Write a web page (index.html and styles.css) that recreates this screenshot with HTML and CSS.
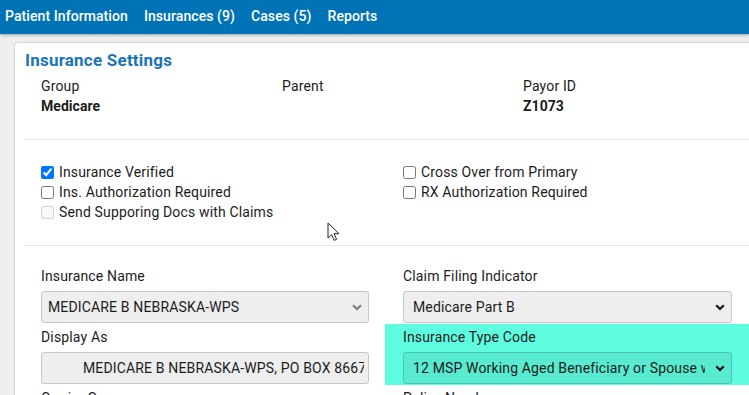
FILE: index.html
```html
<!DOCTYPE html>
<html lang="en">
<head>
<meta charset="utf-8">
<title>Insurance Settings</title>
<link rel="stylesheet" href="styles.css">
</head>
<body>
<nav class="topnav">
  <a class="nav-item">Patient Information</a>
  <a class="nav-item">Insurances (9)</a>
  <a class="nav-item">Cases (5)</a>
  <a class="nav-item">Reports</a>
</nav>
<main class="page">
  <section class="card">
    <h2 class="card-title">Insurance Settings</h2>
    <div class="info-grid">
      <div class="info">
        <div class="info-label">Group</div>
        <div class="info-value">Medicare</div>
      </div>
      <div class="info">
        <div class="info-label">Parent</div>
        <div class="info-value"></div>
      </div>
      <div class="info">
        <div class="info-label">Payor ID</div>
        <div class="info-value">Z1073</div>
      </div>
    </div>
    <div class="checks">
      <div class="check-col">
        <label class="check"><input type="checkbox" checked><span>Insurance Verified</span></label>
        <label class="check"><input type="checkbox"><span>Ins. Authorization Required</span></label>
        <label class="check"><input type="checkbox" disabled><span>Send Supporing Docs with Claims</span></label>
      </div>
      <div class="check-col">
        <label class="check"><input type="checkbox"><span>Cross Over from Primary</span></label>
        <label class="check"><input type="checkbox"><span>RX Authorization Required</span></label>
      </div>
    </div>
    <div class="form-grid">
      <div class="form-col">
        <div class="form-group">
          <div class="form-label">Insurance Name</div>
          <div class="select select-soft">
            <span class="select-text">MEDICARE B NEBRASKA-WPS</span>
            <svg class="chev" width="10" height="7" viewBox="0 0 10 7"><path d="M1 1.2 L5 5 L9 1.2" fill="none" stroke="#7b7b7b" stroke-width="2"/></svg>
          </div>
        </div>
        <div class="form-group">
          <div class="form-label">Display As</div>
          <div class="input-box"><span class="input-text">MEDICARE B NEBRASKA-WPS, PO BOX 8667</span></div>
        </div>
        <div class="form-group">
          <div class="form-label">Carrier Group</div>
        </div>
      </div>
      <div class="form-col">
        <div class="form-group">
          <div class="form-label">Claim Filing Indicator</div>
          <div class="select select-native">
            <span class="select-text">Medicare Part B</span>
            <svg class="chev" width="10" height="7" viewBox="0 0 10 7"><path d="M1.2 1.3 L5 5 L8.8 1.3" fill="none" stroke="#111" stroke-width="2.3"/></svg>
          </div>
        </div>
        <div class="form-group highlight">
          <div class="form-label">Insurance Type Code</div>
          <div class="select select-native select-tint">
            <span class="select-text">12 MSP Working Aged Beneficiary or Spouse with Employer Group Health Plan</span>
            <svg class="chev" width="10" height="7" viewBox="0 0 10 7"><path d="M1.2 1.3 L5 5 L8.8 1.3" fill="none" stroke="#111" stroke-width="2.3"/></svg>
          </div>
        </div>
        <div class="form-group">
          <div class="form-label">Policy Number</div>
        </div>
      </div>
    </div>
  </section>
</main>
<svg class="cursor" width="14" height="20" viewBox="0 0 14 20"><path d="M1 1 L1 16 L4.6 12.6 L7.2 18.4 L9.6 17.3 L7.1 11.7 L12 11.7 Z" fill="#fff" stroke="#222" stroke-width="1" stroke-linejoin="round"/></svg>
</body>
</html>
```
FILE: styles.css
```css
* { box-sizing: border-box; }
html, body { margin: 0; padding: 0; }
body {
  position: relative;
  width: 749px;
  height: 395px;
  overflow: hidden;
  background: #efefef;
  font-family: Roboto, "Liberation Sans", Arial, sans-serif;
  font-size: 14px;
  color: #1c1c1c;
}
.topnav {
  display: flex;
  gap: 16px;
  height: 34px;
  padding: 6px 0 0 5px;
  background: #0073b7;
  box-shadow: 0 1px 3px rgba(0, 0, 0, 0.35);
  position: relative;
  z-index: 1;
  letter-spacing: 0.08px;
}
.nav-item {
  color: #fff;
  font-weight: 500;
  line-height: 20px;
  text-decoration: none;
  white-space: nowrap;
}
.page {
  padding: 8px 0 0 14px;
}
.card {
  width: 760px;
  background: #fff;
  border: 1px solid #d8d8d8;
  border-radius: 4px;
  box-shadow: 0 0 2px rgba(0, 0, 0, 0.08);
  padding: 5px 0 0 9px;
  letter-spacing: 0.15px;
}
.card-title {
  margin: 0 0 4px 1px;
  font-size: 17px;
  line-height: 24px;
  font-weight: 700;
  color: #1a74b9;
  letter-spacing: 0.22px;
}
.info-grid {
  display: grid;
  grid-template-columns: 241px 241px 241px;
  padding-bottom: 23px;
}
.info {
  padding-left: 17px;
  line-height: 20px;
}
.info-value {
  font-weight: 700;
  min-height: 20px;
  letter-spacing: 0.05px;
}
.checks {
  display: grid;
  grid-template-columns: 361px 1fr;
  border-top: 1px solid #e6e6e6;
  padding: 22px 0 23px;
}
.check-col {
  padding-left: 17px;
}
.check-col + .check-col {
  padding-left: 18px;
}
.check {
  display: flex;
  align-items: center;
  gap: 5px;
  height: 20px;
  line-height: 20px;
  white-space: nowrap;
}
.check input {
  margin: 0;
  width: 13px;
  height: 13px;
}
.form-grid {
  display: grid;
  grid-template-columns: 361px 1fr;
  border-top: 1px solid #e6e6e6;
  padding-top: 17px;
}
.form-group {
  padding: 3px 0 1px 17px;
  height: 61px;
}
.form-col + .form-col .form-group {
  padding-left: 18px;
}
.form-group.highlight {
  background: #5ffde0;
}
.form-label {
  line-height: 20px;
  height: 20px;
  margin-bottom: 5px;
  white-space: nowrap;
}
.select, .input-box {
  display: flex;
  align-items: center;
  width: 328px;
  height: 32px;
  border: 1px solid #c8c8c8;
  border-radius: 3px;
  background: #eeeeee;
  white-space: nowrap;
  overflow: hidden;
}
.form-col + .form-col .select {
  width: 329px;
}
.select-soft {
  padding: 0 6px 0 6px;
}
.select-native {
  padding: 0 6px 0 9px;
}
.select-tint {
  background: rgba(0, 0, 0, 0.07);
  border-color: rgba(0, 0, 0, 0.16);
}
.select-text {
  flex: 1;
  overflow: hidden;
  white-space: nowrap;
}
.chev {
  flex: none;
  margin-left: 10px;
}
.input-box {
  padding: 0 4px 0 41px;
}
.input-text {
  overflow: hidden;
  white-space: nowrap;
}
.cursor {
  position: absolute;
  left: 327px;
  top: 222px;
}
```
